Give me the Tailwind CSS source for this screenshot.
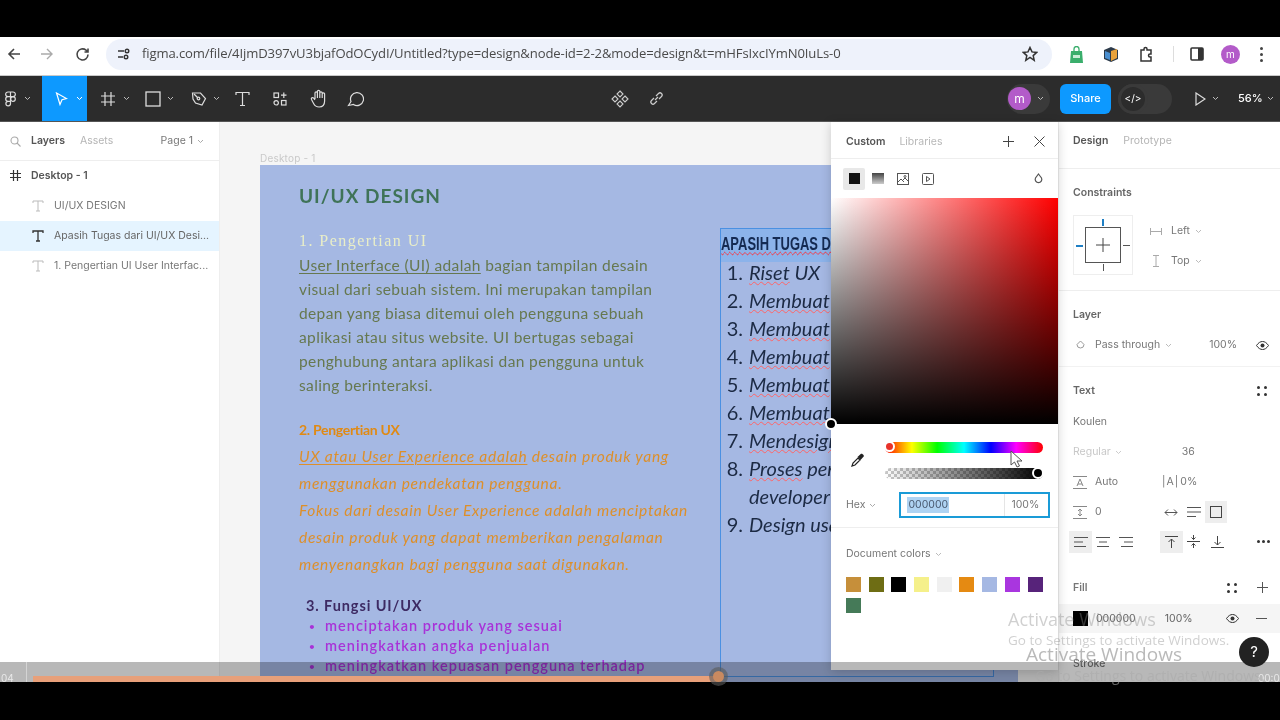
<!DOCTYPE html>
<html>
<head>
<meta charset="utf-8">
<script src="https://cdn.jsdelivr.net/npm/@tailwindcss/browser@4"></script>
</head>
<body class="bg-black">
<div class="relative w-[1280px] h-[720px] overflow-hidden bg-black flex flex-col font-['Inter',sans-serif] blur-[0.5px]">
  <div class="h-[37px] shrink-0 bg-black"></div>

  <!-- browser bar -->
  <div class="h-[39px] shrink-0 bg-white border-b border-[#c9c9c9] flex items-center text-[#444] pb-[4px]">
    <div class="w-[28px] flex justify-center"><svg width="14" height="14" viewBox="0 0 14 14" fill="none" stroke="#444" stroke-width="1.6"><path d="M13 7H2M7 2L2 7l5 5"/></svg></div>
    <div class="w-[38px] flex justify-center"><svg width="14" height="14" viewBox="0 0 14 14" fill="none" stroke="#aaa" stroke-width="1.4"><path d="M1 7h11M7 2l5 5-5 5"/></svg></div>
    <div class="w-[32px] flex justify-center"><svg width="15" height="15" viewBox="0 0 15 15" fill="none" stroke="#444" stroke-width="1.6"><path d="M13 7.5A5.5 5.5 0 1 1 11 3.2L13 5M13 1.5V5H9.5"/></svg></div>
    <div class="ml-[8px] w-[946px] h-[31px] rounded-full bg-[#eef2fb] flex items-center">
      <div class="w-[36px] flex justify-center"><svg width="14" height="12" viewBox="0 0 14 12" fill="none" stroke="#333" stroke-width="1.4"><path d="M1 3h6M1 9h5"/><circle cx="10" cy="3" r="1.8"/><circle cx="9" cy="9" r="1.8"/></svg></div>
      <span class="text-[13.1px] text-[#4a4a4a] whitespace-nowrap font-['Open_Sans',sans-serif] tracking-[-0.12px]">figma.com/file/4IjmD397vU3bjafOdOCydI/Untitled?type=design&amp;node-id=2-2&amp;mode=design&amp;t=mHFsIxcIYmN0IuLs-0</span>
      <div class="ml-auto mr-[14px]"><svg width="16" height="16" viewBox="0 0 16 16" fill="none" stroke="#333" stroke-width="1.5"><path d="M8 1.500l2 4.400 4.700.5-3.500 3.200 1 4.700L8 11.500l-4.200 2.800 1-4.700-3.500-3.200 4.700-.5z"/></svg></div>
    </div>
    <div class="ml-[17px] w-[14px] flex justify-center"><svg width="13" height="17" viewBox="0 0 13 17"><path d="M1 5h11l1 12H0z" fill="#3aae6c"/><path d="M4 5V3a2.500 2.500 0 0 1 5 0v2" fill="none" stroke="#3aae6c" stroke-width="1.300"/><rect x="3" y="9" width="7" height="3" fill="#c9ecd6"/></svg></div>
    <div class="ml-[20px] w-[16px]"><svg width="16" height="17" viewBox="0 0 16 17"><path d="M1 4l7-3 7 3v9l-7 3-7-3z" fill="#2c3a4a"/><path d="M8 5l6-2v9l-6 3z" fill="#e9a23b"/><path d="M2 5l5 2v7l-5-2z" fill="#4a8fd0"/></svg></div>
    <div class="ml-[20px] w-[15px]"><svg width="15" height="16" viewBox="0 0 15 16" fill="none" stroke="#333" stroke-width="1.500"><path d="M2 4h3V3a1.500 1.500 0 0 1 3 0v1h4v4h-1a1.500 1.500 0 0 0 0 3h1v4H2z"/></svg></div>
    <div class="ml-[19px] w-px h-[16px] bg-[#ddd]"></div>
    <div class="ml-[16px] w-[14px]"><svg width="14" height="14" viewBox="0 0 14 14"><rect x="1" y="1" width="12" height="12" rx="1" fill="none" stroke="#333" stroke-width="1.600"/><rect x="8" y="1" width="5" height="12" fill="#333"/></svg></div>
    <div class="ml-[17px] w-[19px] h-[19px] rounded-full bg-[#b35bc9] text-white text-[10px] flex items-center justify-center">m</div>
    <div class="ml-[20px] flex flex-col gap-[3px]"><i class="block w-[3px] h-[3px] rounded-full bg-[#444]"></i><i class="block w-[3px] h-[3px] rounded-full bg-[#444]"></i><i class="block w-[3px] h-[3px] rounded-full bg-[#444]"></i></div>
  </div>

  <!-- figma toolbar -->
  <div class="h-[46px] shrink-0 bg-[#2c2c2c] flex items-stretch border-b border-[#555]">
    <div class="w-[600px] flex items-stretch">
      <div class="w-[42px] flex items-center pl-[5px] gap-[8px]">
        <svg width="11" height="16" viewBox="0 0 11 16" fill="none" stroke="#ddd" stroke-width="1.200"><path d="M5.500 1H3a2.300 2.300 0 0 0 0 4.700h2.500zM5.500 1H8a2.300 2.300 0 0 1 0 4.700H5.500zM5.500 5.700H3a2.300 2.300 0 0 0 0 4.600h2.500zM5.500 10.300H3a2.300 2.300 0 1 0 2.500 2.300z"/><circle cx="8" cy="8" r="2.300"/></svg>
        <svg width="7" height="5" viewBox="0 0 7 5" fill="none" stroke="#bbb"><path d="M1 1l2.500 2.500L6 1"/></svg>
      </div>
      <div class="w-[45px] bg-[#0d99ff] flex items-center pl-[13px] gap-[8px]">
        <svg width="13" height="14" viewBox="0 0 13 14" fill="none" stroke="#fff" stroke-width="1.200"><path d="M1.500 1l10 5.500-4.500 1.200L5 12.500z"/></svg>
        <svg width="7" height="5" viewBox="0 0 7 5" fill="none" stroke="#fff"><path d="M1 1l2.500 2.500L6 1"/></svg>
      </div>
      <div class="w-[46px] flex items-center pl-[13px] gap-[7px]">
        <svg width="16" height="16" viewBox="0 0 16 16" fill="none" stroke="#ddd" stroke-width="1.200"><path d="M5 1v14M11 1v14M1 5h14M1 11h14"/></svg>
        <svg width="7" height="5" viewBox="0 0 7 5" fill="none" stroke="#bbb"><path d="M1 1l2.500 2.500L6 1"/></svg>
      </div>
      <div class="w-[47px] flex items-center pl-[12px] gap-[6px]">
        <svg width="16" height="16" viewBox="0 0 16 16" fill="none" stroke="#ddd" stroke-width="1.300"><rect x="1" y="1" width="14" height="14"/></svg>
        <svg width="7" height="5" viewBox="0 0 7 5" fill="none" stroke="#bbb"><path d="M1 1l2.500 2.500L6 1"/></svg>
      </div>
      <div class="w-[44px] flex items-center pl-[11px] gap-[6px]">
        <svg width="16" height="16" viewBox="0 0 16 16" fill="none" stroke="#ddd" stroke-width="1.200"><path d="M1.500 2h8l5 5.500-3.500 6.500-6.500-2L2 8z"/><circle cx="7.500" cy="7.500" r="1.300"/><path d="M3 3l4 4"/></svg>
        <svg width="7" height="5" viewBox="0 0 7 5" fill="none" stroke="#bbb"><path d="M1 1l2.500 2.500L6 1"/></svg>
      </div>
      <div class="w-[36px] flex items-center justify-center"><svg width="15" height="16" viewBox="0 0 15 16" fill="none" stroke="#ddd" stroke-width="1.200"><path d="M1 4V1.500h13V4M7.500 1.500v13M5 14.500h5"/></svg></div>
      <div class="w-[40px] flex items-center justify-center"><svg width="16" height="16" viewBox="0 0 16 16" fill="none" stroke="#ddd" stroke-width="1.200"><rect x="2" y="2" width="4.500" height="4.500"/><rect x="9.500" y="9.500" width="4.500" height="4.500"/><circle cx="4.200" cy="11.800" r="2.200"/><path d="M11.800 1.500v5.500M9 4.200h5.500"/></svg></div>
      <div class="w-[37px] flex items-center justify-center"><svg width="18" height="19" viewBox="0 0 18 19" fill="none" stroke="#ddd" stroke-width="1.200"><path d="M5 10V4a1.200 1.200 0 0 1 2.400 0V2.500a1.200 1.200 0 0 1 2.400 0V4a1.200 1.200 0 0 1 2.400 0v1a1.200 1.200 0 0 1 2.400 0v7c0 3.500-2 6-5.500 6-3 0-4.500-1.500-5.500-3.500L1.500 10.500c-.7-1.500 1-2.500 2-1.500L5 11M7.400 4v5M9.800 4v5M12.200 5v4"/></svg></div>
      <div class="w-[36px] flex items-center justify-center"><svg width="17" height="17" viewBox="0 0 17 17" fill="none" stroke="#ddd" stroke-width="1.200"><path d="M4 11.500A6.500 6.500 0 1 1 6.500 14.500L1.500 15.500z"/></svg></div>
    </div>
    <div class="w-[80px] flex items-center">
      <div class="ml-[11px]"><svg width="18" height="18" viewBox="0 0 18 18" fill="none" stroke="#ccc" stroke-width="1.100"><path d="M9 1l3 3-3 3-3-3zM9 11l3 3-3 3-3-3zM4 6l3 3-3 3-3-3zM14 6l3 3-3 3-3-3z"/></svg></div>
      <div class="ml-[20px]"><svg width="15" height="15" viewBox="0 0 15 15" fill="none" stroke="#ccc" stroke-width="1.200"><path d="M6 9l3-3M5 7L2.500 9.500a2.100 2.100 0 0 0 3 3L8 10M7 5l2.500-2.500a2.100 2.100 0 0 1 3 3L10 8"/></svg></div>
    </div>
    <div class="flex-1 flex items-center">
      <div class="ml-[327px] w-[43px] h-[30px] rounded-full bg-[#3a3a3a] flex items-center pl-[1px] gap-[6px]">
        <div class="w-[23px] h-[23px] rounded-full bg-[#b35bc9] text-white text-[12px] flex items-center justify-center">m</div>
        <svg width="7" height="5" viewBox="0 0 7 5" fill="none" stroke="#bbb"><path d="M1 1l2.500 2.500L6 1"/></svg>
      </div>
      <div class="ml-[10px] w-[51px] h-[30px] rounded-[6px] bg-[#0d99ff] text-white text-[11px] font-medium flex items-center justify-center">Share</div>
      <div class="ml-[7px] w-[54px] h-[30px] rounded-full bg-[#3a3a3a] flex items-center">
        <div class="w-[30px] h-[30px] rounded-full bg-[#2c2c2c] border-[3px] border-[#3a3a3a] text-white text-[10px] flex items-center justify-center">&lt;/&gt;</div>
      </div>
      <div class="ml-[23px]"><svg width="11" height="14" viewBox="0 0 11 14" fill="none" stroke="#ddd" stroke-width="1.200"><path d="M1 1l9 6-9 6z"/></svg></div>
      <div class="ml-[6px]"><svg width="7" height="5" viewBox="0 0 7 5" fill="none" stroke="#bbb" class="block"><path d="M1 1l2.500 2.500L6 1"/></svg></div>
      <span class="ml-[19px] text-white text-[11px] font-medium">56%</span>
      <div class="ml-[4px]"><svg width="7" height="5" viewBox="0 0 7 5" fill="none" stroke="#bbb" class="block"><path d="M1 1l2.500 2.500L6 1"/></svg></div>
    </div>
  </div>

  <!-- main -->
  <div class="flex-1 min-h-0 relative flex">
    <!-- left panel -->
    <aside class="w-[220px] shrink-0 bg-white border-r border-[#eee] text-[10.5px]">
      <div class="h-[39px] border-b border-[#eee] flex items-center">
        <div class="ml-[10px]"><svg width="11" height="11" viewBox="0 0 11 11" fill="none" stroke="#aaa" stroke-width="1.100" class="block"><circle cx="4.500" cy="4.500" r="3.500"/><path d="M7 7l3.500 3.500"/></svg></div>
        <span class="ml-[10px] font-semibold text-[#555]">Layers</span>
        <span class="ml-[15px] text-[#b5b5b5]">Assets</span>
        <span class="ml-auto text-[#777]">Page 1</span>
        <div class="ml-[4px] mr-[15px]"><svg width="7" height="5" viewBox="0 0 7 5" fill="none" stroke="#aaa" class="block"><path d="M1 1l2.500 2.500L6 1"/></svg></div>
      </div>
      <div class="h-[29px] flex items-center pl-[10px] text-[#333]">
        <svg width="11" height="11" viewBox="0 0 11 11" fill="none" stroke="#333" stroke-width="1.200"><path d="M3.500 0v11M7.500 0v11M0 3.500h11M0 7.500h11"/></svg>
        <span class="ml-[10px] font-semibold text-[#555]">Desktop - 1</span>
      </div>
      <div class="h-[31px] flex items-center pl-[32px] text-[#777]">
        <svg width="12" height="12" viewBox="0 0 12 12" fill="none" stroke="#bbb" stroke-width="1"><path d="M1 3V1h10v2M6 1v10M4 11h4"/></svg>
        <span class="ml-[10px]">UI/UX DESIGN</span>
      </div>
      <div class="h-[30px] flex items-center pl-[32px] text-[#666] bg-[#e5f4ff]">
        <svg width="12" height="12" viewBox="0 0 12 12" fill="none" stroke="#333" stroke-width="1.300"><path d="M1 3V1h10v2M6 1v10M4 11h4"/></svg>
        <span class="ml-[10px] whitespace-nowrap">Apasih Tugas dari UI/UX Desi...</span>
      </div>
      <div class="h-[30px] flex items-center pl-[32px] text-[#777]">
        <svg width="12" height="12" viewBox="0 0 12 12" fill="none" stroke="#bbb" stroke-width="1"><path d="M1 3V1h10v2M6 1v10M4 11h4"/></svg>
        <span class="ml-[10px] whitespace-nowrap">1. Pengertian UI User Interfac...</span>
      </div>
    </aside>

    <!-- canvas -->
    <main class="w-[838px] shrink-0 bg-[#f5f5f5] overflow-hidden pl-[40px] pt-[30px]">
      <div class="text-[10px] leading-[13px] text-[#c9c9c9] tracking-[0.2px]">Desktop - 1</div>
      <div class="w-[758px] h-[560px] bg-[#a5b8e3] flex pl-[39px] font-['Lato',sans-serif]">
        <div class="w-[421px] shrink-0">
          <div class="mt-[18px] h-[26px] flex items-center text-[19px] font-bold tracking-[1px] text-[#3f7358] font-['Lato',sans-serif]">UI/UX DESIGN</div>
          <div class="mt-[20px] h-[24px] flex items-center text-[16px] tracking-[1.45px] text-[#e9eec8] font-['Liberation_Serif',serif]">1. Pengertian UI</div>
          <div class="text-[15.5px] leading-[24px] text-[#66784f] tracking-[0.38px] whitespace-nowrap">
            <div><span class="underline underline-offset-2 decoration-1">User Interface (UI) adalah</span> bagian tampilan desain</div>
            <div>visual dari sebuah sistem. Ini merupakan tampilan</div>
            <div>depan yang biasa ditemui oleh pengguna sebuah</div>
            <div>aplikasi atau situs website. UI bertugas sebagai</div>
            <div>penghubung antara aplikasi dan pengguna untuk</div>
            <div>saling berinteraksi.</div>
          </div>
          <div class="mt-[20px] h-[24px] flex items-center text-[14px] font-bold text-[#e08a14] tracking-[-0.3px]">2. Pengertian UX</div>
          <div class="mt-[2px] text-[15.5px] leading-[27px] italic text-[#dd8f2a] tracking-[0.73px] whitespace-nowrap">
            <div><span class="underline underline-offset-2 decoration-1">UX atau User Experience adalah</span> desain produk yang</div>
            <div>menggunakan pendekatan pengguna.</div>
            <div>Fokus dari desain User Experience adalah menciptakan</div>
            <div>desain produk yang dapat memberikan pengalaman</div>
            <div>menyenangkan bagi pengguna saat digunakan.</div>
          </div>
          <div class="mt-[18px] ml-[7px] h-[20px] flex items-center text-[14.5px] font-bold text-[#3d2a63] tracking-[0.9px]">3. Fungsi UI/UX</div>
          <div class="ml-[10px] text-[14.5px] leading-[20px] font-semibold text-[#a832d8] tracking-[1px] whitespace-nowrap">
            <div class="flex"><span class="w-[16px] text-[10px]">•</span>menciptakan produk yang sesuai</div>
            <div class="flex"><span class="w-[16px] text-[10px]">•</span>meningkatkan angka penjualan</div>
            <div class="flex"><span class="w-[16px] text-[10px]">•</span>meningkatkan kepuasan pengguna terhadap</div>
          </div>
        </div>
        <div class="mt-[63px] w-[274px] h-[449px] border border-[#4a90e2] flex flex-col overflow-hidden">
          <div class="h-[33px] pb-[2px] bg-[#8cb3ea] flex items-center shrink-0">
            <span class="text-[18px] font-bold text-[#142a52] whitespace-nowrap font-['Liberation_Sans',sans-serif] scale-x-[0.72] origin-left underline decoration-wavy decoration-red-500 decoration-1">APASIH TUGAS DARI UI/UX DESIGN</span>
          </div>
          <ol class="-mt-[4px] text-[20px] leading-[28px] text-[#1c2a44] whitespace-nowrap font-['Lato',sans-serif]">
            <li class="flex"><span class="w-[28px] text-right pr-[6px]">1.</span><i class="underline decoration-wavy decoration-red-400 decoration-1">Riset</i><i>&nbsp;UX</i></li>
            <li class="flex"><span class="w-[28px] text-right pr-[6px]">2.</span><i class="underline decoration-wavy decoration-red-400 decoration-1">Membuat</i><i>&nbsp;information</i></li>
            <li class="flex"><span class="w-[28px] text-right pr-[6px]">3.</span><i class="underline decoration-wavy decoration-red-400 decoration-1">Membuat</i><i>&nbsp;wireframe</i></li>
            <li class="flex"><span class="w-[28px] text-right pr-[6px]">4.</span><i class="underline decoration-wavy decoration-red-400 decoration-1">Membuat</i><i>&nbsp;UI</i></li>
            <li class="flex"><span class="w-[28px] text-right pr-[6px]">5.</span><i class="underline decoration-wavy decoration-red-400 decoration-1">Membuat</i><i>&nbsp;prototype</i></li>
            <li class="flex"><span class="w-[28px] text-right pr-[6px]">6.</span><i class="underline decoration-wavy decoration-red-400 decoration-1">Membuat</i><i>&nbsp;sistem</i></li>
            <li class="flex"><span class="w-[28px] text-right pr-[6px]">7.</span><i class="underline decoration-wavy decoration-red-400 decoration-1">Mendesign</i><i>&nbsp;visual</i></li>
            <li class="flex"><span class="w-[28px] text-right pr-[6px]">8.</span><i class="underline decoration-wavy decoration-red-400 decoration-1">Proses</i><i>&nbsp;pengembangan</i></li>
            <li class="flex"><span class="w-[28px]"></span><i>developer</i></li>
            <li class="flex"><span class="w-[28px] text-right pr-[6px]">9.</span><i>Design usability</i></li>
          </ol>
        </div>
      </div>
    </main>

    <!-- right panel -->
    <aside class="flex-1 bg-white text-[10.5px] text-[#666] border-l border-[#eee]">
      <div class="h-[47px] border-b border-[#eee] flex items-center pl-[14px] pb-[9px] gap-[15px]"><span class="font-semibold text-[#555]">Design</span><span class="text-[#b5b5b5]">Prototype</span></div>
      <div class="h-[122px] border-b border-[#eee] px-[14px]">
        <div class="h-[46px] pt-[2px] flex items-center font-semibold text-[#666]">Constraints</div>
        <div class="flex">
          <div class="relative w-[60px] h-[60px] border border-[#eee] flex items-center justify-center">
            <div class="w-[36px] h-[36px] border border-[#555] flex items-center justify-center"><svg width="14" height="14" viewBox="0 0 14 14" stroke="#444"><path d="M7 0v14M0 7h14"/></svg></div>
            <i class="absolute top-[3px] left-[28px] w-[2px] h-[7px] bg-[#1f7fc4]"></i>
            <i class="absolute bottom-[3px] left-[29px] w-px h-[7px] bg-[#555]"></i>
            <i class="absolute left-[2px] top-[29px] w-[7px] h-[2px] bg-[#1f7fc4]"></i>
            <i class="absolute right-[2px] top-[29px] w-[7px] h-px bg-[#555]"></i>
          </div>
          <div class="ml-[17px] pt-[1px] text-[#777]">
            <div class="h-[30px] flex items-center"><svg width="12" height="7" viewBox="0 0 12 7" fill="none" stroke="#aaa"><path d="M.5 0v7M11.500 0v7M.5 3.500h11"/></svg><span class="ml-[9px]">Left</span><svg class="ml-[5px]" width="7" height="5" viewBox="0 0 7 5" fill="none" stroke="#bbb"><path d="M1 1l2.500 2.500L6 1"/></svg></div>
            <div class="h-[30px] flex items-center"><svg width="12" height="12" viewBox="0 0 12 12" fill="none" stroke="#aaa"><path d="M3 .5h6M3 11.500h6M6 .5v11"/></svg><span class="ml-[9px]">Top</span><svg class="ml-[5px]" width="7" height="5" viewBox="0 0 7 5" fill="none" stroke="#bbb"><path d="M1 1l2.500 2.500L6 1"/></svg></div>
          </div>
        </div>
      </div>
      <div class="h-[76px] border-b border-[#f2f2f2] px-[14px]">
        <div class="h-[46px] pt-[1px] flex items-center font-semibold text-[#666]">Layer</div>
        <div class="h-[16px] flex items-center text-[#777]">
          <svg class="ml-[3px]" width="9" height="10" viewBox="0 0 9 10" fill="none" stroke="#999"><path d="M4.500 1l3.500 3.500a3 3 0 0 1-7 0z"/></svg>
          <span class="ml-[10px]">Pass through</span>
          <svg class="ml-[5px]" width="7" height="5" viewBox="0 0 7 5" fill="none" stroke="#bbb"><path d="M1 1l2.500 2.500L6 1"/></svg>
          <span class="ml-auto mr-[19px]">100%</span>
          <svg class="mr-[1px]" width="13" height="9" viewBox="0 0 13 9"><path d="M.5 4.500C2.500 1.500 4.500.5 6.500.5s4 1 6 4c-2 3-4 4-6 4s-4-1-6-4z" fill="none" stroke="#333"/><circle cx="6.500" cy="4.500" r="2" fill="#333"/></svg>
        </div>
      </div>
      <div class="h-[202px] px-[14px] text-[#777]">
        <div class="h-[47px] flex items-center justify-between font-semibold text-[#666] pr-[3px]"><span>Text</span>
          <div class="grid grid-cols-2 gap-[4px]"><i class="block w-[3px] h-[3px] rounded-full bg-[#333]"></i><i class="block w-[3px] h-[3px] rounded-full bg-[#333]"></i><i class="block w-[3px] h-[3px] rounded-full bg-[#333]"></i><i class="block w-[3px] h-[3px] rounded-full bg-[#333]"></i></div>
        </div>
        <div class="h-[16px] flex items-center">Koulen</div>
        <div class="mt-[7px] h-[30px] flex items-center"><span class="text-[#c8c8c8]">Regular</span><svg class="ml-[4px]" width="7" height="5" viewBox="0 0 7 5" fill="none" stroke="#ccc"><path d="M1 1l2.500 2.500L6 1"/></svg><span class="ml-[60px]">36</span></div>
        <div class="h-[30px] flex items-center">
          <svg width="14" height="13" viewBox="0 0 14 13" fill="none" stroke="#888"><path d="M0 .5h14M0 12.500h14M4 10l3-7 3 7M5 8h4"/></svg>
          <span class="ml-[8px]">Auto</span>
          <span class="ml-[44px] tracking-[1px]">|A|</span><span class="ml-[1px]">0%</span>
        </div>
        <div class="h-[30px] flex items-center">
          <svg width="14" height="13" viewBox="0 0 14 13" fill="none" stroke="#888"><path d="M0 .5h14M0 12.500h14M7 3v7M5 5l2-2 2 2M5 8l2 2 2-2"/></svg>
          <span class="ml-[8px]">0</span>
          <svg class="ml-[62px]" width="14" height="9" viewBox="0 0 14 9" fill="none" stroke="#555"><path d="M1 4.500h12M4 1.500l-3 3 3 3M10 1.500l3 3-3 3"/></svg>
          <svg class="ml-[9px]" width="14" height="10" viewBox="0 0 14 10" fill="none" stroke="#555"><path d="M0 .5h14M0 5h14M0 9.500h9"/></svg>
          <div class="ml-[4px] w-[22px] h-[22px] bg-[#eee] flex items-center justify-center"><div class="w-[12px] h-[12px] border border-[#444]"></div></div>
        </div>
        <div class="h-[29px] flex items-center -ml-[4px]">
          <div class="w-[23px] h-[22px] bg-[#eee] flex items-center justify-center"><svg width="14" height="10" viewBox="0 0 14 10" fill="none" stroke="#555"><path d="M0 .5h14M0 5h9M0 9.500h12"/></svg></div>
          <svg class="ml-[4px]" width="14" height="10" viewBox="0 0 14 10" fill="none" stroke="#555"><path d="M0 .5h14M3 5h8M1 9.500h12"/></svg>
          <svg class="ml-[9px]" width="14" height="10" viewBox="0 0 14 10" fill="none" stroke="#555"><path d="M0 .5h14M5 5h9M2 9.500h12"/></svg>
          <div class="ml-[27px] w-[23px] h-[22px] bg-[#eee] flex items-center justify-center"><svg width="13" height="12" viewBox="0 0 13 12" fill="none" stroke="#444"><path d="M0 .5h13M6.500 3v9M3.500 6l3-3 3 3"/></svg></div>
          <svg class="ml-[4px]" width="13" height="13" viewBox="0 0 13 13" fill="none" stroke="#444"><path d="M0 6.500h13M6.500 0v4.500M6.500 8.500V13M4.500 2.500l2 2 2-2M4.500 10.500l2-2 2 2"/></svg>
          <svg class="ml-[11px]" width="13" height="12" viewBox="0 0 13 12" fill="none" stroke="#444"><path d="M0 11.500h13M6.500 0v9M3.500 6l3 3 3-3"/></svg>
          <div class="ml-[33px] flex gap-[2px]"><i class="block w-[3px] h-[3px] rounded-full bg-[#333]"></i><i class="block w-[3px] h-[3px] rounded-full bg-[#333]"></i><i class="block w-[3px] h-[3px] rounded-full bg-[#333]"></i></div>
        </div>
      </div>
      <div class="px-[14px] h-[35px] pt-[2px] flex items-center font-semibold text-[#777]">
        <span>Fill</span>
        <div class="ml-auto grid grid-cols-2 gap-[4px]"><i class="block w-[3px] h-[3px] rounded-full bg-[#333]"></i><i class="block w-[3px] h-[3px] rounded-full bg-[#333]"></i><i class="block w-[3px] h-[3px] rounded-full bg-[#333]"></i><i class="block w-[3px] h-[3px] rounded-full bg-[#333]"></i></div>
        <svg class="ml-[20px] mr-[2px]" width="11" height="11" viewBox="0 0 11 11" stroke="#555"><path d="M5.500 0v11M0 5.500h11"/></svg>
      </div>
      <div class="h-[29px] bg-[#f5f5f5] px-[14px] flex items-center text-[#666]">
        <div class="w-[15px] h-[15px] bg-black"></div>
        <span class="ml-[8px]">000000</span>
        <span class="ml-[29px]">100%</span>
        <svg class="ml-[33px]" width="13" height="9" viewBox="0 0 13 9"><path d="M.5 4.500C2.500 1.500 4.500.5 6.500.5s4 1 6 4c-2 3-4 4-6 4s-4-1-6-4z" fill="none" stroke="#333"/><circle cx="6.500" cy="4.500" r="2" fill="#333"/></svg>
        <i class="ml-[17px] block w-[11px] h-px bg-[#555]"></i>
      </div>
      <div class="h-[19px]"></div>
      <div class="px-[14px] h-[24px] flex items-center font-medium text-[#777]">Stroke</div>
    </aside>

    <!-- color picker -->
    <div class="absolute left-[831px] top-0 w-[227px] h-[548px] bg-white shadow-[0_2px_10px_rgba(0,0,0,0.18)] text-[10.5px] text-[#777]">
      <div class="h-[37px] pt-[3px] border-b border-[#eee] flex items-center px-[15px]">
        <span class="font-semibold text-[#555]">Custom</span>
        <span class="ml-[14px] text-[#b8b8b8]">Libraries</span>
        <svg class="ml-auto" width="11" height="11" viewBox="0 0 11 11" stroke="#444"><path d="M5.500 0v11M0 5.500h11"/></svg>
        <svg class="ml-[20px] -mr-[2px]" width="11" height="11" viewBox="0 0 11 11" stroke="#444"><path d="M.5.500l10 10M10.500.5l-10 10"/></svg>
      </div>
      <div class="h-[39px] flex items-center pl-[12px]">
        <div class="w-[22px] h-[22px] rounded-[2px] bg-[#e8e8e8] flex items-center justify-center"><div class="w-[11px] h-[11px] bg-[#111]"></div></div>
        <div class="ml-[7px] w-[12px] h-[11px] bg-[linear-gradient(to_bottom,#444,#ccc)]"></div>
        <svg class="ml-[13px]" width="12" height="12" viewBox="0 0 12 12" fill="none" stroke="#555"><rect x=".5" y=".5" width="11" height="11"/><path d="M1 9l3-3 3 3M6 7l2-2 3 3"/><circle cx="8" cy="3.500" r="1"/></svg>
        <svg class="ml-[13px]" width="12" height="12" viewBox="0 0 12 12" fill="none" stroke="#555"><rect x=".5" y=".5" width="11" height="11" rx="1"/><path d="M4.500 3.500l3.500 2.500-3.500 2.500z"/></svg>
        <svg class="ml-auto mr-[15px]" width="9" height="11" viewBox="0 0 9 11" fill="none" stroke="#555" stroke-width="1.200"><path d="M4.500 1l3 4a3.300 3.300 0 1 1-6 0z"/></svg>
      </div>
      <div class="h-[226px] bg-[linear-gradient(to_top,#000,transparent),linear-gradient(to_right,#fff,#ff0000)] bg-no-repeat"></div>
      <div class="h-[68px] pt-[4px] flex items-center">
        <div class="ml-[20px] w-[14px]"><svg width="14" height="14" viewBox="0 0 14 14" fill="none"><path d="M1 13l1-3 5-5 2 2-5 5z" stroke="#222" stroke-width="1.200"/><path d="M6.500 4L10 .8c1-.8 3.500 1.500 2.700 2.700L9.500 7z" fill="#222"/></svg></div>
        <div class="ml-[20px] w-[158px]">
          <div class="relative h-[11px] rounded-full bg-[linear-gradient(to_right,#f00,#ff0_17%,#0f0_33%,#0ff_50%,#00f_67%,#f0f_83%,#f00)]">
            <i class="absolute -left-[1px] -top-[1px] block w-[11px] h-[11px] rounded-full bg-[#e8322a] border-2 border-white"></i>
          </div>
          <div class="relative mt-[15px] h-[11px] rounded-full bg-[repeating-conic-gradient(#c8c8c8_0_25%,#fff_0_50%)] bg-[length:6px_6px]">
            <div class="h-full rounded-full bg-[linear-gradient(to_right,transparent,#000)]"></div>
            <i class="absolute -right-[1px] -top-[1px] block w-[12px] h-[12px] rounded-full bg-black border-2 border-white"></i>
          </div>
        </div>
      </div>
      <div class="h-[26px] flex items-center pl-[15px]">
        <span>Hex</span>
        <svg class="ml-[4px]" width="7" height="5" viewBox="0 0 7 5" fill="none" stroke="#aaa"><path d="M1 1l2.500 2.500L6 1"/></svg>
        <div class="ml-[23px] w-[151px] h-[26px] border-2 border-[#1a9bd7] flex items-center">
          <div class="w-[104px] pl-[6px] h-full flex items-center border-r border-[#e5e5e5]"><span class="bg-[#afd3f2] text-[#4a5a70] px-[1px]">000000</span></div>
          <span class="ml-[6px]">100%</span>
        </div>
      </div>
      <div class="mt-[9px] h-[50px] pt-[3px] border-t border-[#eee] flex items-center pl-[15px]">
        <span>Document colors</span>
        <svg class="ml-[4px]" width="7" height="5" viewBox="0 0 7 5" fill="none" stroke="#bbb"><path d="M1 1l2.500 2.500L6 1"/></svg>
      </div>
      <div class="pl-[15px] pr-[10px] flex flex-wrap gap-x-[7.7px] gap-y-[6px]">
        <i class="block w-[15px] h-[15px] bg-[#c68f3a]"></i>
        <i class="block w-[15px] h-[15px] bg-[#6e6d14]"></i>
        <i class="block w-[15px] h-[15px] bg-[#000000]"></i>
        <i class="block w-[15px] h-[15px] bg-[#f5f08a]"></i>
        <i class="block w-[15px] h-[15px] bg-[#f0f0f0]"></i>
        <i class="block w-[15px] h-[15px] bg-[#e58a12]"></i>
        <i class="block w-[15px] h-[15px] bg-[#a5b8e3]"></i>
        <i class="block w-[15px] h-[15px] bg-[#a936df]"></i>
        <i class="block w-[15px] h-[15px] bg-[#57237a]"></i>
        <i class="block w-[15px] h-[15px] bg-[#457a58]"></i>
      </div>
    </div>
    <!-- gradient knob -->
    <i class="absolute left-[825px] top-[296px] block w-[12px] h-[12px] rounded-full bg-black border-2 border-white"></i>
    <!-- mouse cursor -->
    <svg class="absolute left-[1010px] top-[328px]" width="14" height="18" viewBox="0 0 14 18"><path d="M1 1v14l3.500-3 2.500 5 2.500-1-2.500-5H12z" fill="#fff" stroke="#555"/></svg>

    <!-- video bar -->
    <div class="absolute left-0 right-0 bottom-0 h-[20px] bg-black/28">
      <div class="absolute left-[33px] top-[14px] w-[685px] h-[6px] bg-[#e8a07a]"></div>
      <div class="absolute left-[26px] top-0 w-px h-[20px] bg-white/40"></div>
      <span class="absolute left-[1px] top-[9px] text-[10px] text-[#e8e8e8]">04</span>
      <span class="absolute left-[1258px] top-[9px] text-[10px] text-[#e8e8e8]">00:0</span>
      <div class="absolute left-[709px] top-[5px] w-[19px] h-[19px] rounded-full bg-[#5a5a5a]/60 flex items-center justify-center"><i class="block w-[11px] h-[11px] rounded-full bg-[#c98a60]"></i></div>
    </div>
    <!-- help -->
    <div class="absolute left-[1239px] top-[515px] w-[30px] h-[30px] rounded-full bg-[#222] text-white text-[15px] flex items-center justify-center">?</div>
    <!-- activation watermarks -->
    <span class="absolute left-[1008px] top-[486px] text-[18px] leading-[22px] text-[#8a8a8a]/40 whitespace-nowrap font-['Open_Sans',sans-serif]">Activate Windows</span>
    <span class="absolute left-[1008px] top-[510px] text-[13.5px] leading-[17px] text-[#8a8a8a]/40 whitespace-nowrap font-['Open_Sans',sans-serif]">Go to Settings to activate Windows.</span>
    <span class="absolute left-[1026px] top-[521px] text-[19px] leading-[22px] text-[#8a8a8a]/60 whitespace-nowrap font-['Open_Sans',sans-serif]">Activate Windows</span>
    <span class="absolute left-[1035px] top-[545px] text-[14px] leading-[17px] text-[#aaa]/60 whitespace-nowrap font-['Open_Sans',sans-serif]">Go to Settings to activate Windows.</span>
  </div>
  <div class="h-[38px] shrink-0 bg-black"></div>
</div>
</body>
</html>
